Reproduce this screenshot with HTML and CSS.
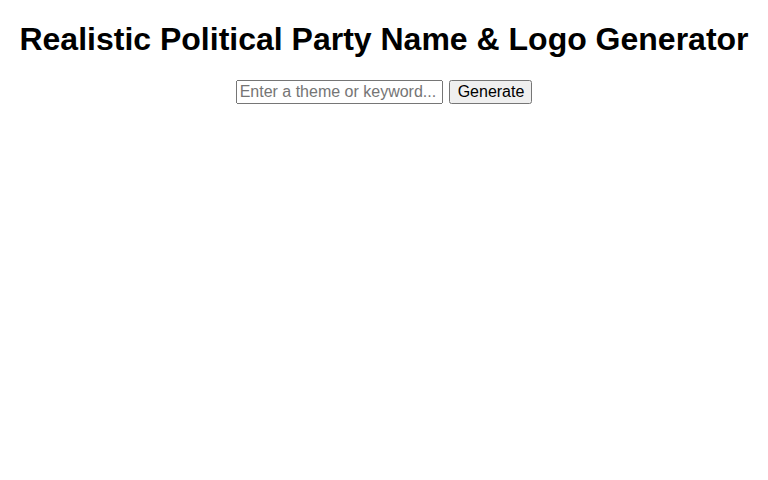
FILE: index.html
```html
<!DOCTYPE html>
<html>
<head>
<meta charset="utf-8">
<title>Realistic Political Party Name &amp; Logo Generator</title>
<link rel="stylesheet" href="styles.css">
</head>
<body>
<h1 class="title">Realistic Political Party Name &amp; Logo Generator</h1>
<div class="controls">
<input class="theme-input" type="text" placeholder="Enter a theme or keyword..."><button class="gen-btn">Generate</button>
</div>
</body>
</html>
```
FILE: styles.css
```css
body {
  margin: 0;
  font-family: "Liberation Sans", Arial, sans-serif;
  text-align: center;
  background: #fff;
  color: #000;
}
.title {
  font-size: 32px;
  margin: 21px 0 22px;
}
.theme-input, .gen-btn {
  font-family: "Liberation Sans", Arial, sans-serif;
  font-size: 16px;
}
.theme-input {
  width: 199px;
}
.gen-btn {
  margin-left: 6px;
  padding: 1px 6px 1px 7px;
}
```
